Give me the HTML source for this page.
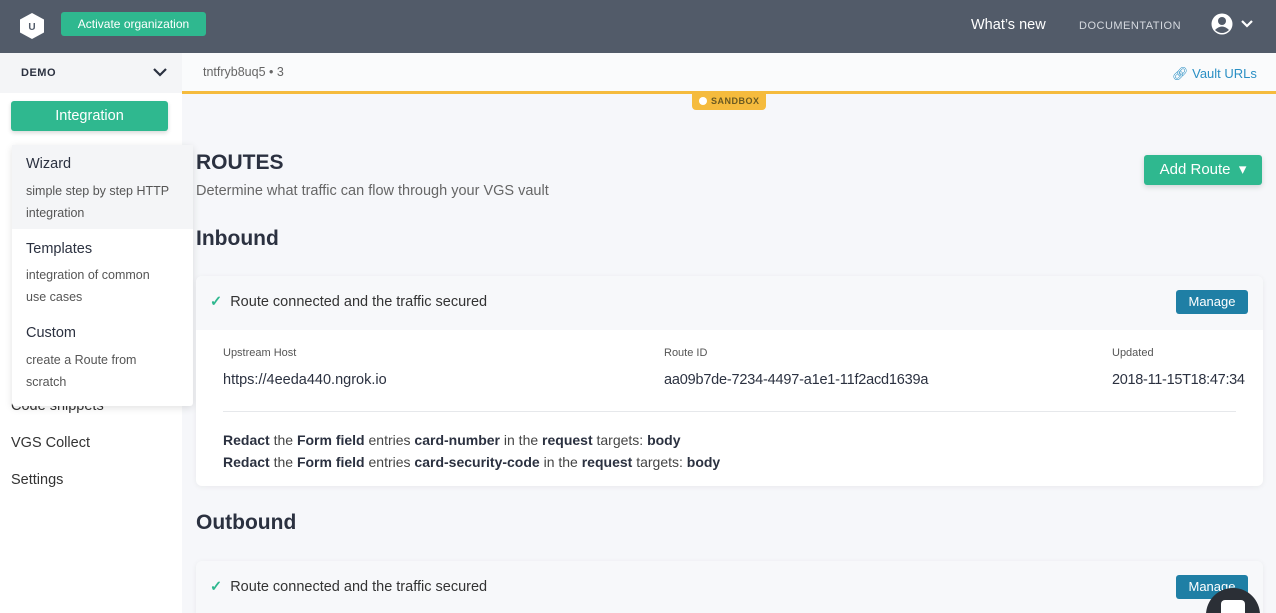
<!DOCTYPE html>
<html style="width:1276px;height:613px;overflow:hidden"><head><meta charset="utf-8"><style>
*{margin:0;padding:0;box-sizing:border-box}
body{width:1276px;height:613px;overflow:hidden;background:#f6f7fa;font-family:"Liberation Sans",sans-serif;color:#2b3140;position:relative}
.a{position:absolute}
.hdr{left:0;top:0;width:1276px;height:53px;background:#525b69}
.btn{background:#2fb88f;color:#fff;border-radius:3px;text-align:center}
.side{left:0;top:53px;width:182px;height:560px;background:#fff}
.card{background:#fff;border-radius:6px;box-shadow:0 1px 6px rgba(0,0,0,.06)}
.mg{background:#1f7fa5;color:#fff;font-size:13px;border-radius:3px;text-align:center;line-height:24px}
.lbl{font-size:11px;color:#555}
.val{font-size:14.5px;color:#2b3140}
b{color:#2b3140}
</style></head><body>
<div class="a hdr"></div>
<svg class="a" style="left:19px;top:12px" width="26" height="28" viewBox="0 0 26 28"><polygon points="13,1 25,7.5 25,20.5 13,27 1,20.5 1,7.5" fill="#fff"/><text x="13" y="18" font-size="10" font-weight="bold" text-anchor="middle" fill="#525b69" font-family="Liberation Sans">U</text></svg>
<div class="a btn" style="left:61px;top:12px;width:145px;height:24px;line-height:24px;font-size:12px">Activate organization</div>
<div class="a" style="left:971px;top:17px;color:#fff;font-size:14.5px">What’s new</div>
<div class="a" style="left:1079px;top:20px;color:#d6dae0;font-size:11px;letter-spacing:.5px">DOCUMENTATION</div>
<svg class="a" style="left:1211px;top:13px" width="46" height="24"><circle cx="11" cy="11" r="10.5" fill="#fff"/><circle cx="11" cy="8" r="4" fill="#525b69"/><path d="M4 17 Q11 10 18 17 Q11 23 4 17Z" fill="#525b69"/><path d="M31 8 l5 5 l5 -5" stroke="#fff" stroke-width="2.2" fill="none"/></svg>
<div class="a side"></div>
<div class="a" style="left:0;top:53px;width:182px;height:40px;background:#f4f5f7"></div>
<div class="a" style="left:21px;top:67px;font-size:11px;font-weight:bold;letter-spacing:.5px">DEMO</div>
<svg class="a" style="left:153px;top:67px" width="14" height="10"><path d="M1 2 l6 6 l6 -6" stroke="#2b3140" stroke-width="2.2" fill="none"/></svg>
<div class="a" style="left:182px;top:53px;width:1094px;height:39px;background:#fafbfc"></div>
<div class="a" style="left:203px;top:65px;font-size:12.5px;color:#666">tntfryb8uq5 • 3</div>
<div class="a" style="left:1172px;top:66px;font-size:13px;color:#2a8fc4">🔗︎ Vault URLs</div>
<div class="a" style="left:182px;top:91px;width:1094px;height:3px;background:#f5bb3d"></div>
<div class="a" style="left:692px;top:92px;width:74px;height:18px;background:#f5bb3d;border-radius:0 0 4px 4px;font-size:9px;font-weight:bold;letter-spacing:.5px;color:#6b5a22;line-height:18px;padding-left:7px"><span style="display:inline-block;width:8px;height:8px;border-radius:50%;background:#fff;margin-right:4px;vertical-align:-1px"></span>SANDBOX</div>
<div class="a btn" style="left:11px;top:101px;width:157px;height:30px;line-height:30px;font-size:14.5px;box-shadow:0 2px 4px rgba(0,0,0,.15)">Integration</div>
<div class="a" style="left:11px;top:398px;font-size:14.5px;color:#333">Code snippets</div>
<div class="a" style="left:11px;top:435px;font-size:14.5px;color:#333">VGS Collect</div>
<div class="a" style="left:11px;top:472px;font-size:14.5px;color:#333">Settings</div>
<div class="a" style="left:12px;top:145px;width:181px;height:261px;background:#fff;box-shadow:0 2px 8px rgba(0,0,0,.12);border-radius:3px"></div>
<div class="a" style="left:12px;top:145px;width:181px;height:84px;background:#f4f5f7"></div>
<div class="a" style="left:26px;top:156px;font-size:14.5px">Wizard</div>
<div class="a" style="left:26px;top:180px;font-size:12.5px;color:#555;line-height:22px;width:160px">simple step by step HTTP integration</div>
<div class="a" style="left:26px;top:241px;font-size:14.5px">Templates</div>
<div class="a" style="left:26px;top:264px;font-size:12.5px;color:#555;line-height:22px;width:140px">integration of common use cases</div>
<div class="a" style="left:26px;top:325px;font-size:14.5px">Custom</div>
<div class="a" style="left:26px;top:349px;font-size:12.5px;color:#555;line-height:22px;width:125px">create a Route from scratch</div>
<div class="a" style="left:196px;top:151px;font-size:21px;font-weight:bold">ROUTES</div>
<div class="a" style="left:196px;top:183px;font-size:14.5px;color:#666">Determine what traffic can flow through your VGS vault</div>
<div class="a btn" style="left:1144px;top:155px;width:118px;height:30px;line-height:30px;font-size:15px;box-shadow:0 2px 6px rgba(0,0,0,.15)">Add Route &nbsp;▾</div>
<div class="a" style="left:196px;top:227px;font-size:21px;font-weight:bold">Inbound</div>
<div class="a card" style="left:196px;top:276px;width:1067px;height:210px"></div>
<div class="a" style="left:196px;top:276px;width:1067px;height:54px;background:#f7f8fa;border-radius:6px 6px 0 0"></div>
<div class="a" style="left:210px;top:294px;font-size:14.5px;color:#333"><span style="color:#2fb88f;font-weight:bold">✓</span>&nbsp; Route connected and the traffic secured</div>
<div class="a mg" style="left:1176px;top:290px;width:72px">Manage</div>
<div class="a lbl" style="left:223px;top:347px">Upstream Host</div>
<div class="a lbl" style="left:664px;top:347px">Route ID</div>
<div class="a lbl" style="left:1112px;top:347px">Updated</div>
<div class="a val" style="left:223px;top:372px">https://4eeda440.ngrok.io</div>
<div class="a val" style="left:664px;top:372px;letter-spacing:-.2px">aa09b7de-7234-4497-a1e1-11f2acd1639a</div>
<div class="a val" style="left:1112px;top:372px;letter-spacing:-.3px">2018-11-15T18:47:34</div>
<div class="a" style="left:223px;top:411px;width:1013px;height:1px;background:#e6e8eb"></div>
<div class="a" style="left:223px;top:429px;font-size:14px;line-height:22px;color:#444"><b>Redact</b> the <b>Form field</b> entries <b>card-number</b> in the <b>request</b> targets: <b>body</b><br><b>Redact</b> the <b>Form field</b> entries <b>card-security-code</b> in the <b>request</b> targets: <b>body</b></div>
<div class="a" style="left:196px;top:511px;font-size:21px;font-weight:bold">Outbound</div>
<div class="a card" style="left:196px;top:561px;width:1067px;height:60px;background:#f7f8fa"></div>
<div class="a" style="left:210px;top:579px;font-size:14.5px;color:#333"><span style="color:#2fb88f;font-weight:bold">✓</span>&nbsp; Route connected and the traffic secured</div>
<div class="a mg" style="left:1176px;top:575px;width:72px">Manage</div>
<div class="a" style="left:1206px;top:588px;width:54px;height:54px;border-radius:50%;background:#2b2f36"></div>
<div class="a" style="left:1221px;top:600px;width:24px;height:20px;border-radius:4px;background:#fff"></div>
</body></html>
